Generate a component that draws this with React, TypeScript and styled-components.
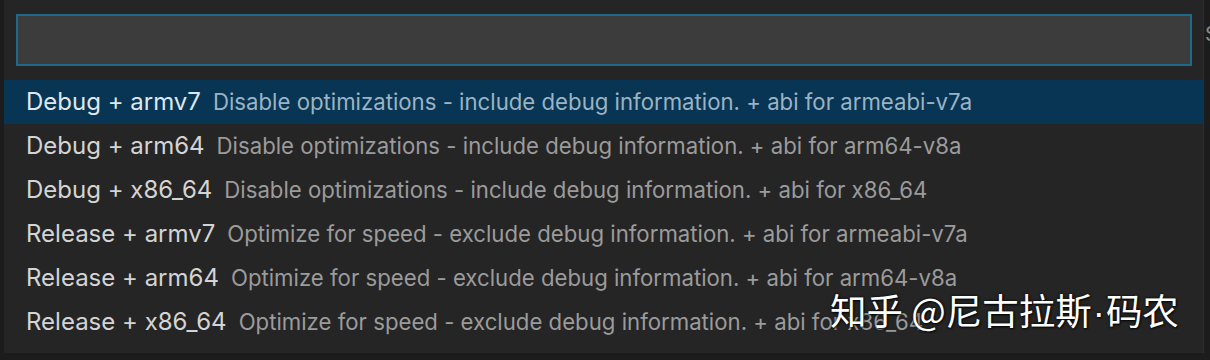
import React from "react";
import styled, { createGlobalStyle } from "styled-components";

const GlobalStyle = createGlobalStyle`
  html, body {
    margin: 0;
    padding: 0;
    background: #1c1c1c;
    width: 1210px;
    height: 360px;
    overflow: hidden;
  }
`;

const Screen = styled.div`
  position: relative;
  display: flex;
  width: 1210px;
  height: 360px;
  background: #1c1c1c;
  font-family: Inter, "Noto Sans", sans-serif;
`;

const LeftEdge = styled.div`
  width: 4px;
  flex: none;
`;

const Picker = styled.div`
  flex: none;
  width: 1199px;
  height: 353px;
  background: #252526;
  box-sizing: border-box;
  padding-top: 14px;
  display: flex;
  flex-direction: column;
  box-shadow: 1px 0 0 #2e2e2e;
`;

const InputBox = styled.div`
  margin: 0 11px 14px 12px;
  height: 52px;
  box-sizing: border-box;
  background: #3c3c3c;
  border: 2px solid #1d6a8c;
`;

const List = styled.div`
  display: flex;
  flex-direction: column;
`;

const Row = styled.div<{ $selected?: boolean }>`
  display: flex;
  align-items: center;
  gap: 12px;
  height: 44px;
  padding-left: 22px;
  padding-bottom: 1px;
  box-sizing: border-box;
  background: ${(p) => (p.$selected ? "#073553" : "transparent")};
  white-space: nowrap;
`;

const Label = styled.span<{ $selected?: boolean }>`
  font-size: 24px;
  color: ${(p) => (p.$selected ? "#dfe7ec" : "#d4d4d4")};
`;

const Description = styled.span<{ $selected?: boolean }>`
  font-size: 22.2px;
  color: ${(p) => (p.$selected ? "#9bb3c4" : "#9b9b9b")};
`;

const SideText = styled.div`
  flex: none;
  padding-top: 22px;
  padding-left: 2px;
  font-size: 20px;
  color: #8a8a8a;
`;

const Watermark = styled.div`
  position: absolute;
  left: 830px;
  top: 283px;
  font-family: "Noto Sans CJK SC", sans-serif;
  font-size: 36.5px;
  color: #ffffff;
  text-shadow: 0 0 3px rgba(0, 0, 0, 0.9), 1px 1px 2px rgba(0, 0, 0, 0.8);
  white-space: nowrap;
`;

const Dot = styled.span`
  font-family: "Liberation Sans", sans-serif;
  margin: 0 1px;
`;

const items = [
  { label: "Debug + armv7", desc: "Disable optimizations - include debug information. + abi for armeabi-v7a" },
  { label: "Debug + arm64", desc: "Disable optimizations - include debug information. + abi for arm64-v8a" },
  { label: "Debug + x86_64", desc: "Disable optimizations - include debug information. + abi for x86_64" },
  { label: "Release + armv7", desc: "Optimize for speed - exclude debug information. + abi for armeabi-v7a" },
  { label: "Release + arm64", desc: "Optimize for speed - exclude debug information. + abi for arm64-v8a" },
  { label: "Release + x86_64", desc: "Optimize for speed - exclude debug information. + abi for x86_64" },
];

const App: React.FC = () => {
  return (
    <>
      <GlobalStyle />
      <Screen>
        <LeftEdge />
        <Picker>
          <InputBox />
          <List>
            {items.map((item, i) => (
              <Row key={item.label} $selected={i === 0}>
                <Label $selected={i === 0}>{item.label}</Label>
                <Description $selected={i === 0}>{item.desc}</Description>
              </Row>
            ))}
          </List>
        </Picker>
        <SideText>S</SideText>
        <Watermark>
          知乎 @尼古拉斯<Dot>·</Dot>码农
        </Watermark>
      </Screen>
    </>
  );
};

export default App;
